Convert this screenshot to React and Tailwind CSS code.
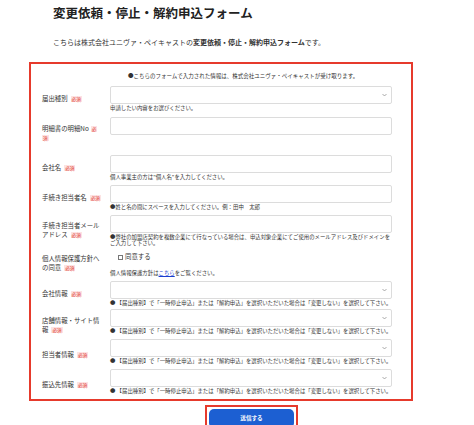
import React from "react";

const FONT = { fontFamily: '"Noto Sans CJK JP", "Noto Sans", sans-serif' };

function Badge({ text = "必須", ml = "ml-[3px]" }) {
  return (
    <span className={ml + " bg-[#fde3e3] px-[1px] text-[4.6px] leading-[6px] text-[#e0362c]"}>{text}</span>
  );
}

function Chevron() {
  return (
    <svg className="absolute right-[4px] top-1/2 -translate-y-1/2" width="5" height="4" viewBox="0 0 10 6" fill="none">
      <path d="M1 1l4 4 4-4" stroke="#888" strokeWidth="1.4" />
    </svg>
  );
}

function Field({ select }) {
  return (
    <div className="relative h-[18px] w-[282px] rounded-[2px] border border-[#dcdcdc] bg-white">
      {select && <Chevron />}
    </div>
  );
}

function Help({ children, cls = "" }) {
  return <div className={"mt-[1px] text-[5.4px] leading-[7px] text-[#333] " + cls}>{children}</div>;
}

function Row({ label, children, mt, lpt = "pt-[8px]", badge = true }) {
  return (
    <div className={"flex " + mt}>
      <div className={"w-[59px] shrink-0 text-[6.4px] leading-[9px] text-[#333] " + lpt}>
        {label}
        {badge && <Badge />}
      </div>
      <div className="ml-[9px] w-[282px]">{children}</div>
    </div>
  );
}

const STOP = "● 【届出種別】で「一時停止申込」または「解約申込」を選択いただいた場合は「変更しない」を選択して下さい。";

export default function App() {
  return (
    <div className="relative h-[425px] w-[474px] overflow-hidden bg-white text-[#222]" style={FONT}>
      <h1 className="ml-[53px] pt-[4px] text-[12.5px] font-bold leading-[17px] text-[#222]">
        変更依頼・停止・解約申込フォーム
      </h1>
      <p className="ml-[53px] mt-[17px] text-[7px] leading-[9px] text-[#333]">
        こちらは株式会社ユニヴァ・ペイキャストの<span className="font-bold">変更依頼・停止・解約申込フォーム</span>です。
      </p>
      <div className="ml-[29px] mt-[15px] w-[384px] border-2 border-[#e63a2c] pb-[4px] pl-[11px] pt-[9px]">
        <div className="pl-[86px] text-[5.5px] leading-[7px] text-[#333]">
          ●こちらのフォームで入力された情報は、株式会社ユニヴァ・ペイキャストが受け取ります。
        </div>
        <Row label="届出種別" mt="mt-[6px]">
          <Field select />
          <Help>申請したい内容をお選びください。</Help>
        </Row>
        <Row
          label={
            <>
              明細書の明細No<Badge text="必" ml="ml-[2px]" />
              <br />
              <Badge text="須" ml="ml-0" />
            </>
          }
          badge={false}
          mt="mt-[5px]"
          lpt="pt-[7px]"
        >
          <Field />
        </Row>
        <Row label="会社名" mt="mt-[13px]">
          <Field />
          <Help>個人事業主の方は"個人名"を入力してください。</Help>
        </Row>
        <Row label="手続き担当者名" mt="mt-[4px]">
          <Field />
          <Help>●姓と名の間にスペースを入力してください。例：田中　太郎</Help>
        </Row>
        <Row label="手続き担当者メールアドレス" mt="mt-[4px]" lpt="pt-[6px]">
          <Field />
          <Help cls="!leading-[5.5px] pt-[1px]">
            ●弊社の加盟店契約を複数企業にて行なっている場合は、申込対象企業にてご使用のメールアドレス及びドメインをご入力して下さい。
          </Help>
        </Row>
        <Row label="個人情報保護方針への同意" mt="mt-[5px]" lpt="pt-[3px]">
          <div className="flex items-center pl-[8px] pt-[2px] text-[6.4px] leading-[8px] text-[#333]">
            <span className="mr-[2px] inline-block h-[5px] w-[5px] border border-[#777] bg-white" />
            同意する
          </div>
          <Help cls="mt-[9px]">
            個人情報保護方針は<span className="text-[#1a3fd0] underline">こちら</span>をご覧ください。
          </Help>
        </Row>
        <Row label="会社情報" mt="mt-[4px]">
          <Field select />
          <Help>{STOP}</Help>
        </Row>
        <Row label="店舗情報・サイト情報" mt="mt-[2px]" lpt="pt-[7px]">
          <Field select />
          <Help>{STOP}</Help>
        </Row>
        <Row label="担当者情報" mt="mt-[4px]" lpt="pt-[11px]">
          <Field select />
          <Help>{STOP}</Help>
        </Row>
        <Row label="振込先情報" mt="mt-[4px]" lpt="pt-[11px]">
          <Field select />
          <Help>{STOP}</Help>
        </Row>
      </div>
      <div className="ml-[205px] mt-[4px] w-[93px] border-2 border-[#e63a2c] p-[2px]">
        <button className="flex h-[19px] w-full items-center justify-center rounded-[5px] bg-[#1c5fd2] text-[5.6px] font-bold text-white">
          送信する
        </button>
      </div>
    </div>
  );
}
